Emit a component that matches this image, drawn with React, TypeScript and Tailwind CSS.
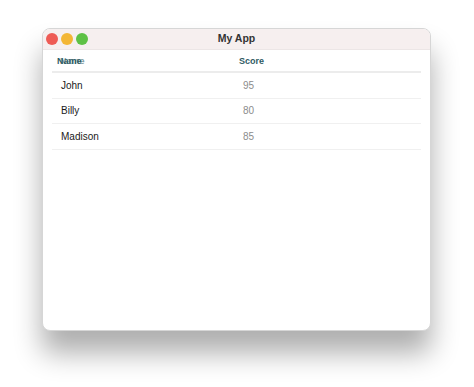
import React from "react";

const rows = [
  { name: "John", score: 95 },
  { name: "Billy", score: 80 },
  { name: "Madison", score: 85 },
];

export default function App() {
  return (
    <div className="w-[474px] h-[387px] bg-white pt-[28px] pl-[42px]" style={{ fontFamily: '"Liberation Sans", Arial, sans-serif' }}>
      <div className="w-[389px] h-[303px] bg-white rounded-[8px] overflow-hidden border border-[#d6d6d6] shadow-[0_22px_28px_rgba(0,0,0,0.32)] flex flex-col">
        <div className="h-[21px] bg-[#f6efef] relative flex items-center justify-center border-b border-[#ece6e6]">
          <div className="absolute left-[3px] top-[4px] flex gap-[3px]">
            <div className="w-[12px] h-[12px] rounded-full bg-[#ee5b55]" />
            <div className="w-[12px] h-[12px] rounded-full bg-[#f3b635]" />
            <div className="w-[12px] h-[12px] rounded-full bg-[#5ec145]" />
          </div>
          <span className="text-[10.5px] font-bold text-[#333]">My App</span>
        </div>
        <div className="mx-[9px] flex flex-col">
          <div className="flex h-[23px] pt-[3px] items-center border-b-2 border-[#ececec] text-[9px] font-bold text-[#2f5b64]">
            <div className="w-[183px] pl-[5px] relative">
              <span>Name</span>
              <span className="absolute left-[8px] top-0 opacity-60">Name</span>
            </div>
            <div className="pl-[4px]">Score</div>
          </div>
          {rows.map((r) => (
            <div key={r.name} className="flex h-[25.5px] items-center border-b border-[#f0f0f0] text-[10px]">
              <div className="w-[183px] pl-[9px] text-[#1a1a1a]">{r.name}</div>
              <div className="pl-[8px] text-[#8c8c8c]">{r.score}</div>
            </div>
          ))}
        </div>
      </div>
    </div>
  );
}
